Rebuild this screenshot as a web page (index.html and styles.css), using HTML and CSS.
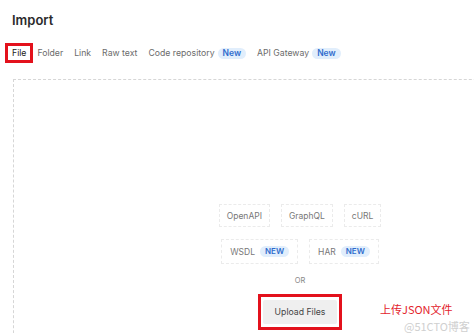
FILE: index.html
```html
<!DOCTYPE html>
<html>
<head>
<meta charset="utf-8">
<link rel="stylesheet" href="styles.css">
</head>
<body>
<div class="page">
  <h1 class="title">Import</h1>
  <div class="tabs">
    <span class="tab tab-active">File</span>
    <span class="tab">Folder</span>
    <span class="tab">Link</span>
    <span class="tab">Raw text</span>
    <span class="tab">Code repository <span class="badge">New</span></span>
    <span class="tab">API Gateway <span class="badge">New</span></span>
  </div>
  <div class="dropzone">
    <div class="formats">
      <div class="row">
        <span class="fmt">OpenAPI</span>
        <span class="fmt">GraphQL</span>
        <span class="fmt">cURL</span>
      </div>
      <div class="row">
        <span class="fmt fmt-wide">WSDL <span class="badge badge-caps">NEW</span></span>
        <span class="fmt fmt-wide">HAR <span class="badge badge-caps">NEW</span></span>
      </div>
      <div class="or">OR</div>
      <span class="highlight"><button class="upload">Upload Files</button></span>
    </div>
  </div>
  <div class="note">上传JSON文件</div>
  <div class="watermark">@51CTO博客</div>
</div>
</body>
</html>
```

FILE: styles.css
```css
html, body {
  margin: 0;
  padding: 0;
  background: #ffffff;
  overflow: hidden;
}
body {
  font-family: Inter, "Noto Sans", "Noto Sans CJK SC", sans-serif;
  color: #333;
}
.page {
  position: relative;
  width: 474px;
  height: 333px;
  overflow: hidden;
  padding: 12px 0 0 12px;
  box-sizing: border-box;
}
.title {
  margin: 0;
  font-size: 13px;
  font-weight: 600;
  line-height: 16px;
  color: #2b2b2b;
}
.tabs {
  display: flex;
  align-items: center;
  gap: 11px;
  margin-top: 17px;
  height: 16px;
  font-size: 8.7px;
  color: #6b6b6b;
  white-space: nowrap;
}
.tab {
  display: inline-flex;
  align-items: center;
  gap: 3px;
}
.tab-active {
  color: #222;
  border: 3px solid #e3111c;
  padding: 2px 4px;
  margin: -5px -7px -5px -7px;
  background: #fff;
}
.badge {
  display: inline-block;
  background: #e1eefc;
  color: #2f6ccd;
  font-weight: 600;
  border-radius: 6px;
  padding: 0 5px;
  line-height: 11px;
  font-size: 8.5px;
}
.badge-caps {
  font-size: 8px;
}
.dropzone {
  margin-top: 18px;
  margin-left: 1px;
  width: 574px;
  height: 400px;
  border: 1px dashed #d6d6d6;
  box-sizing: border-box;
}
.formats {
  display: flex;
  flex-direction: column;
  align-items: center;
  padding-top: 124px;
}
.row {
  display: flex;
  gap: 11px;
  margin-bottom: 12px;
}
.fmt {
  box-sizing: border-box;
  display: inline-flex;
  align-items: center;
  justify-content: center;
  gap: 5px;
  height: 23px;
  padding: 0 7px;
  border: 1px dashed #ebebeb;
  font-size: 8.5px;
  color: #777;
}
.fmt-wide {
  height: 25px;
  padding: 0 8px;
}
.or {
  font-size: 7.5px;
  color: #888;
  line-height: 10px;
}
.highlight {
  display: inline-block;
  border: 3px solid #e3111c;
  padding: 3px 2px;
  margin-top: 8px;
}
.upload {
  display: block;
  font-family: Inter, "Noto Sans", sans-serif;
  font-size: 8.7px;
  color: #444;
  background: #efefef;
  border: none;
  border-radius: 2px;
  padding: 0 12px;
  height: 24px;
}
.note {
  position: absolute;
  left: 380px;
  top: 301px;
  font-size: 11px;
  color: #e3232d;
  font-family: "Noto Sans CJK SC", sans-serif;
  line-height: 16px;
}
.watermark {
  position: absolute;
  left: 404px;
  top: 320px;
  font-size: 11px;
  color: #d0d0d0;
  font-family: "Noto Sans CJK SC", sans-serif;
  line-height: 12px;
}
```
